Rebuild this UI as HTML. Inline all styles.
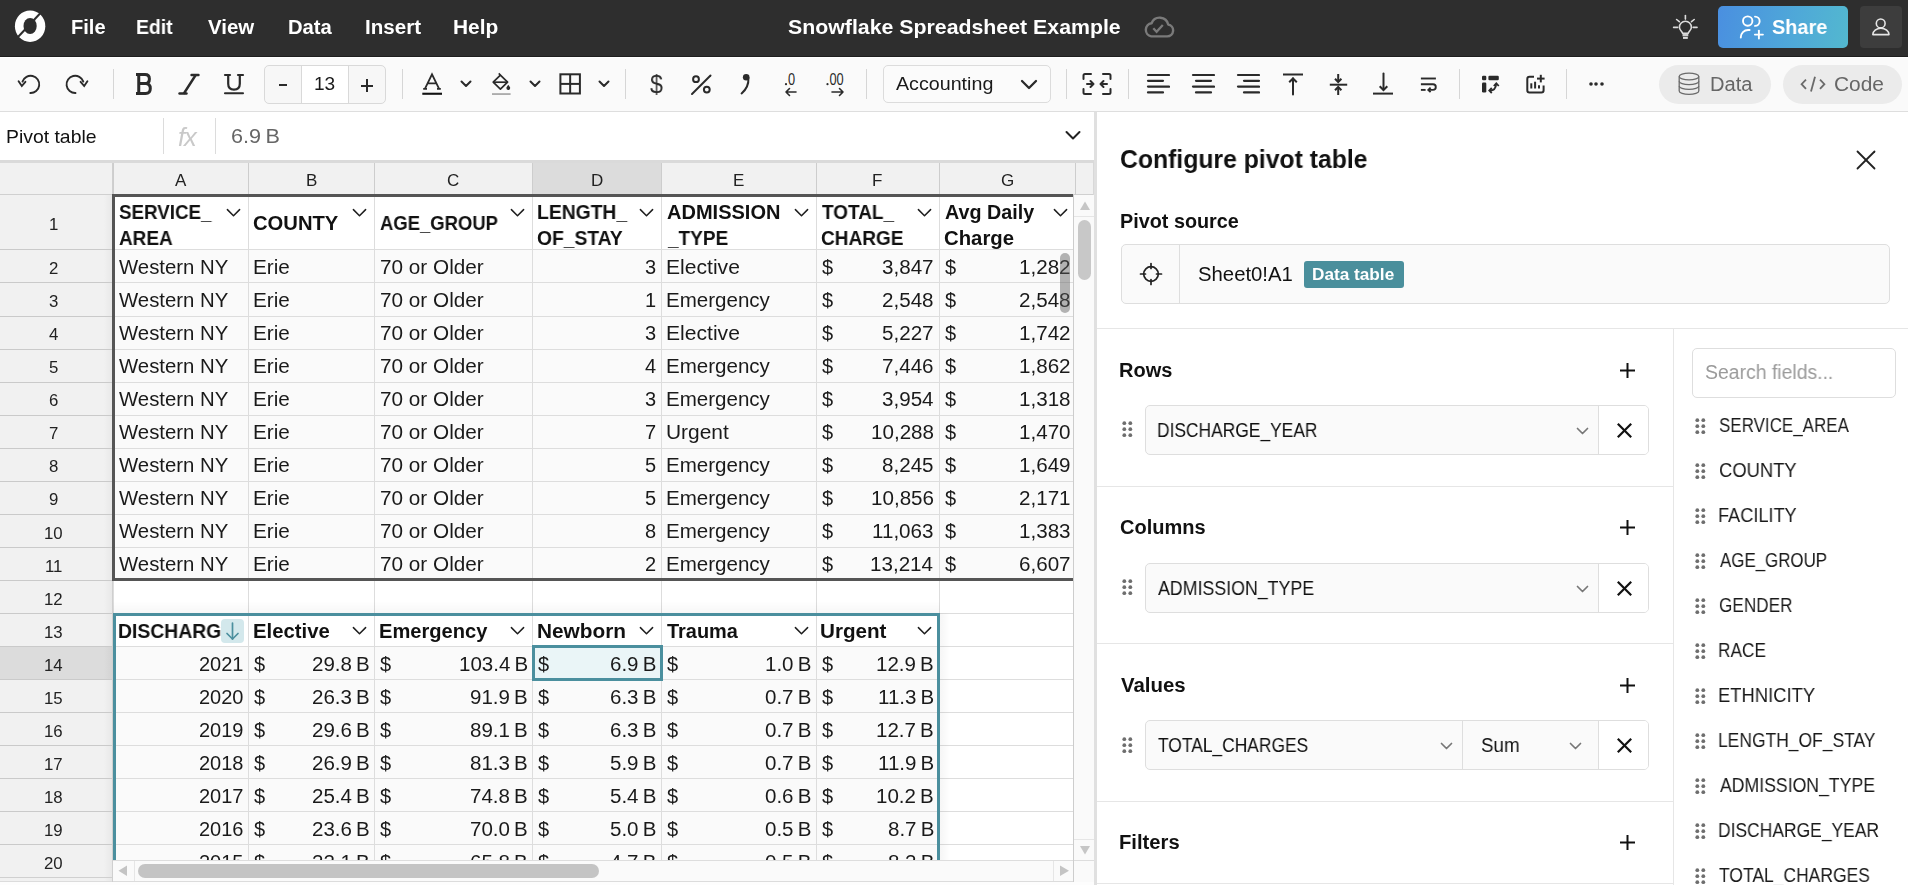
<!DOCTYPE html>
<html><head><meta charset="utf-8"><title>Snowflake Spreadsheet Example</title>
<style>
html,body{margin:0;padding:0;}
body{width:1908px;height:885px;overflow:hidden;position:relative;background:#fff;font-family:"Liberation Sans",sans-serif;}
.r{position:absolute;box-sizing:border-box;}
.t{position:absolute;white-space:pre;line-height:1;transform-origin:0 0;will-change:transform;}
</style></head><body>
<div class="r" style="left:0px;top:0px;width:1908px;height:56px;background:#2e2e2e;"></div>
<div class="r" style="left:0px;top:56px;width:1908px;height:1px;background:#1e1e1e;"></div>
<svg class="r" style="left:10px;top:6px;" width="40" height="40" viewBox="0 0 40 40"><ellipse cx="20.1" cy="20.2" rx="15.2" ry="15.7" fill="#fff"/><ellipse cx="20.1" cy="20" rx="6.6" ry="8" fill="#2e2e2e"/><line x1="31" y1="6.5" x2="7.5" y2="31.5" stroke="#2e2e2e" stroke-width="2"/></svg>
<div class="t" style="left:71.20px;top:17.27px;font-size:20px;font-weight:700;color:#fff;transform:scaleX(1.0031);">File</div>
<div class="t" style="left:136.34px;top:17.27px;font-size:20px;font-weight:700;color:#fff;transform:scaleX(0.9724);">Edit</div>
<div class="t" style="left:207.70px;top:17.27px;font-size:20px;font-weight:700;color:#fff;transform:scaleX(1.0221);">View</div>
<div class="t" style="left:287.68px;top:17.27px;font-size:20px;font-weight:700;color:#fff;transform:scaleX(1.0118);">Data</div>
<div class="t" style="left:365.26px;top:17.27px;font-size:20px;font-weight:700;color:#fff;transform:scaleX(1.0284);">Insert</div>
<div class="t" style="left:453.24px;top:17.27px;font-size:20px;font-weight:700;color:#fff;transform:scaleX(1.0437);">Help</div>
<div class="t" style="left:788.06px;top:15.82px;font-size:21px;font-weight:700;color:#fff;transform:scaleX(1.0145);">Snowflake Spreadsheet Example</div>
<svg class="r" style="left:1142px;top:16px;" width="34" height="24" viewBox="0 0 34 24"><path d="M9.2 20.4 H25.2 A6 6 0 0 0 26.2 8.5 A8.7 8.7 0 0 0 9.6 7.2 A6.7 6.7 0 0 0 9.2 20.4 Z" fill="none" stroke="#7a7a7a" stroke-width="2.4" stroke-linejoin="round"/><path d="M11.3 12.3 L14.6 15.8 L20.8 8.9" fill="none" stroke="#7a7a7a" stroke-width="2.3" stroke-linecap="butt" stroke-linejoin="miter"/></svg>
<svg class="r" style="left:1672px;top:14px;" width="26" height="26" viewBox="0 0 26 26"><g fill="none" stroke="#dcdcdc" stroke-width="1.6" stroke-linecap="round"><line x1="13.4" y1="1.6" x2="13.4" y2="5.1"/><line x1="1.6" y1="13.4" x2="5.6" y2="13.4"/><line x1="21.2" y1="13.4" x2="25" y2="13.4"/><line x1="4.6" y1="5.5" x2="7.3" y2="7.7"/><line x1="22.2" y1="5.5" x2="19.5" y2="7.7"/><path d="M10.6 19.3 C10.2 17.6 7.4 16.2 7.4 13.2 A6 6 0 0 1 19.4 13.2 C19.4 16.2 16.6 17.6 16.2 19.3 Z" stroke-linejoin="round"/></g><rect x="10.5" y="19.9" width="5.8" height="2.4" fill="#cfcfcf"/><rect x="11" y="22.9" width="4.8" height="2" fill="#dcdcdc"/></svg>
<div class="r" style="left:1718px;top:6px;width:130px;height:42px;border-radius:5px;background:linear-gradient(100deg,#4a8fe0 0%,#4fa9d8 60%,#53b8cf 100%);"></div>
<svg class="r" style="left:1739px;top:15px;" width="26" height="25" viewBox="0 0 26 25"><g fill="none" stroke="#fff" stroke-width="1.9" stroke-linecap="round"><circle cx="8.7" cy="6.1" r="4.7"/><path d="M16 1.6 A4.65 4.65 0 0 1 16 10.9"/><path d="M1.8 22.6 V22.3 A7.3 7.3 0 0 1 9.1 15 H10.6"/><line x1="19.9" y1="15.6" x2="19.9" y2="23.6"/><line x1="15.9" y1="19.6" x2="23.9" y2="19.6"/></g></svg>
<div class="t" style="left:1772.40px;top:16.87px;font-size:20px;font-weight:700;color:#fff;transform:scaleX(0.9945);">Share</div>
<div class="r" style="left:1860px;top:6px;width:42px;height:42px;background:#3d3d3d;border-radius:4px;"></div>
<svg class="r" style="left:1870px;top:16px;" width="22" height="22" viewBox="0 0 22 22"><g fill="none" stroke="#e6e6e6" stroke-width="1.6"><circle cx="10.7" cy="7.4" r="4.4"/><path d="M2.8 18.6 A8.1 6.4 0 0 1 19 18.6 Z" stroke-linejoin="round"/></g></svg>
<div class="r" style="left:0px;top:57px;width:1908px;height:1px;background:#ffffff;"></div>
<div class="r" style="left:0px;top:58px;width:1908px;height:53px;background:#fafafa;"></div>
<div class="r" style="left:0px;top:111px;width:1908px;height:1px;background:#dedede;"></div>
<div class="r" style="left:113px;top:69px;width:1px;height:30px;background:#d6d6d6;"></div>
<div class="r" style="left:402px;top:69px;width:1px;height:30px;background:#d6d6d6;"></div>
<div class="r" style="left:625px;top:69px;width:1px;height:30px;background:#d6d6d6;"></div>
<div class="r" style="left:866px;top:69px;width:1px;height:30px;background:#d6d6d6;"></div>
<div class="r" style="left:1066px;top:69px;width:1px;height:30px;background:#d6d6d6;"></div>
<div class="r" style="left:1128px;top:69px;width:1px;height:30px;background:#d6d6d6;"></div>
<div class="r" style="left:1459px;top:69px;width:1px;height:30px;background:#d6d6d6;"></div>
<div class="r" style="left:1566px;top:69px;width:1px;height:30px;background:#d6d6d6;"></div>
<svg class="r" style="left:17px;top:72px;" width="26" height="26" viewBox="0 0 26 26"><g fill="none" stroke="#2a2a2a" stroke-width="1.9" stroke-linecap="round" stroke-linejoin="miter"><path d="M13.3 21 A8.6 8.6 0 1 0 5.5 9.6"/><path d="M1.6 9.3 L4.8 14 L8.4 9.8"/></g></svg>
<svg class="r" style="left:65px;top:72px;" width="26" height="26" viewBox="0 0 26 26"><g fill="none" stroke="#2a2a2a" stroke-width="1.9" stroke-linecap="round" stroke-linejoin="miter"><path d="M10.5 21 A8.6 8.6 0 1 1 18.3 9.6"/><path d="M22.4 9.3 L19.2 14 L15.6 9.8"/></g></svg>
<svg class="r" style="left:133.4px;top:72px;" width="22" height="24" viewBox="0 0 22 24"><g fill="none" stroke="#2a2a2a" stroke-width="3" stroke-linejoin="round"><path d="M3 2.5 H12 C15.2 2.5 16.4 4.4 16.4 6.9 C16.4 9.6 14.8 11.5 12 11.5 H5.75"/><path d="M5.75 11.5 H12.6 C15.9 11.5 17.3 13.5 17.3 16.5 C17.3 19.5 15.8 21.5 12.6 21.5 H3"/><line x1="5.75" y1="2.5" x2="5.75" y2="21.5"/></g></svg>
<svg class="r" style="left:176px;top:72px;" width="26" height="26" viewBox="0 0 26 26"><g fill="none" stroke="#2a2a2a" stroke-width="2.4" stroke-linecap="round"><line x1="19.4" y1="3.5" x2="8.2" y2="21"/><line x1="15.5" y1="3" x2="22.5" y2="3"/><line x1="3.5" y1="21.5" x2="10.5" y2="21.5"/></g></svg>
<svg class="r" style="left:222px;top:72px;" width="24" height="26" viewBox="0 0 24 26"><g fill="none" stroke="#2a2a2a" stroke-width="2.2" stroke-linecap="round"><path d="M6.2 3 V11.8 C6.2 15.6 8.5 17.6 12 17.6 C15.5 17.6 17.8 15.6 17.8 11.8 V3"/><line x1="3" y1="3" x2="8" y2="3"/><line x1="16" y1="3" x2="21" y2="3"/><line x1="3" y1="21.2" x2="21" y2="21.2" stroke-width="2.1"/></g></svg>
<div class="r" style="left:264px;top:65px;width:122px;height:39px;border:1px solid #d9d9d9;border-radius:5px;background:#f7f7f7;"></div>
<div class="r" style="left:301px;top:66px;width:48px;height:37px;background:#fff;"></div>
<div class="r" style="left:301px;top:66px;width:1px;height:37px;background:#d9d9d9;"></div>
<div class="r" style="left:348px;top:66px;width:1px;height:37px;background:#d9d9d9;"></div>
<div class="r" style="left:279px;top:84px;width:8px;height:2px;background:#2a2a2a;"></div>
<div class="t" style="left:313.57px;top:74.32px;font-size:19px;font-weight:400;color:#1a1a1a;transform:scaleX(1.0050);">13</div>
<div class="r" style="left:360.8px;top:84.5px;width:12.5px;height:2px;background:#2a2a2a;"></div>
<div class="r" style="left:366px;top:79.3px;width:2px;height:12.5px;background:#2a2a2a;"></div>
<svg class="r" style="left:420px;top:72px;" width="26" height="26" viewBox="0 0 26 26"><g fill="none" stroke="#2a2a2a" stroke-width="1.8" stroke-linejoin="miter"><path d="M5 16.6 L12 2.3 L19 16.6 M7.6 11.3 H16.4"/><path d="M3.2 16.8 H7 M17 16.8 H20.8" stroke-width="1.7"/></g><rect x="2.3" y="20.7" width="19.7" height="2.1" fill="#111"/></svg>
<svg class="r" style="left:460px;top:80px;" width="12" height="8" viewBox="0 0 12 8"><path d="M1.5 1.5 L6 6 L10.5 1.5" fill="none" stroke="#2a2a2a" stroke-width="2" stroke-linecap="round" stroke-linejoin="round"/></svg>
<svg class="r" style="left:529px;top:80px;" width="12" height="8" viewBox="0 0 12 8"><path d="M1.5 1.5 L6 6 L10.5 1.5" fill="none" stroke="#2a2a2a" stroke-width="2" stroke-linecap="round" stroke-linejoin="round"/></svg>
<svg class="r" style="left:598px;top:80px;" width="12" height="8" viewBox="0 0 12 8"><path d="M1.5 1.5 L6 6 L10.5 1.5" fill="none" stroke="#2a2a2a" stroke-width="2" stroke-linecap="round" stroke-linejoin="round"/></svg>
<svg class="r" style="left:490px;top:72px;" width="26" height="26" viewBox="0 0 26 26"><g fill="none" stroke="#2a2a2a" stroke-width="1.7" stroke-linejoin="round"><path d="M10.4 3.2 L3.2 10.2 L10.4 17.2 L17.6 10.2 Z"/><line x1="3.2" y1="10.2" x2="17.6" y2="10.2"/><line x1="10.4" y1="3.2" x2="8.8" y2="1.4"/></g><path d="M18.3 12.8 C19.4 14.3 20.2 15.2 20.2 16.1 A1.9 1.9 0 0 1 16.4 16.1 C16.4 15.2 17.2 14.3 18.3 12.8Z" fill="#2a2a2a"/><rect x="2" y="21.3" width="18.6" height="1.5" fill="#999"/></svg>
<svg class="r" style="left:558px;top:72px;" width="24" height="24" viewBox="0 0 24 24"><g fill="none" stroke="#2a2a2a" stroke-width="2"><rect x="2.4" y="2.3" width="19.5" height="19.2"/><line x1="12.15" y1="2.3" x2="12.15" y2="21.5"/><line x1="2.4" y1="11.9" x2="21.9" y2="11.9"/></g></svg>
<div class="t" style="left:649.82px;top:72.04px;font-size:25px;font-weight:400;color:#2a2a2a;transform:scaleX(0.9283);">$</div>
<svg class="r" style="left:689px;top:72px;" width="26" height="26" viewBox="0 0 26 26"><g fill="none" stroke="#2a2a2a" stroke-width="2"><circle cx="7" cy="7.2" r="2.9"/><circle cx="17.8" cy="17.6" r="2.9"/><line x1="3" y1="22" x2="21.5" y2="3.5" stroke-linecap="round"/></g></svg>
<svg class="r" style="left:736px;top:70px;" width="16" height="28" viewBox="0 0 16 28"><circle cx="10.2" cy="7.2" r="3.3" fill="#2a2a2a"/><path d="M12.4 8 C12.8 14 10.2 19.5 5.6 23.4" fill="none" stroke="#2a2a2a" stroke-width="2" stroke-linecap="round"/></svg>
<svg class="r" style="left:780px;top:70px;" width="22" height="28" viewBox="0 0 22 28"><circle cx="6" cy="14.2" r="1.1" fill="#2a2a2a"/><text x="8" y="15.2" font-family="Liberation Sans" font-size="16" fill="#2a2a2a" transform="translate(8 0) scale(0.8 1) translate(-8 0)">0</text><path d="M16 22 H6 M9.5 18.5 L6 22 L9.5 25.5" fill="none" stroke="#2a2a2a" stroke-width="1.6" stroke-linecap="round" stroke-linejoin="round"/></svg>
<svg class="r" style="left:822px;top:70px;" width="28" height="28" viewBox="0 0 28 28"><circle cx="5.5" cy="14.2" r="1.1" fill="#2a2a2a"/><text x="7.5" y="15.2" font-family="Liberation Sans" font-size="16" fill="#2a2a2a" transform="translate(7.5 0) scale(0.8 1) translate(-7.5 0)">00</text><path d="M10 22 H21 M17.5 18.5 L21 22 L17.5 25.5" fill="none" stroke="#2a2a2a" stroke-width="1.6" stroke-linecap="round" stroke-linejoin="round"/></svg>
<div class="r" style="left:883px;top:65px;width:168px;height:38px;border:1px solid #dcdcdc;border-radius:5px;background:#fbfbfb;"></div>
<div class="t" style="left:896.00px;top:73.62px;font-size:19px;font-weight:400;color:#1a1a1a;transform:scaleX(1.0354);">Accounting</div>
<svg class="r" style="left:1020px;top:79px;" width="18" height="11" viewBox="0 0 18 11"><path d="M2 2 L9 9 L16 2" fill="none" stroke="#2a2a2a" stroke-width="2.3" stroke-linecap="round" stroke-linejoin="round"/></svg>
<svg class="r" style="left:1082px;top:73px;" width="30" height="22" viewBox="0 0 30 22"><g fill="none" stroke="#2a2a2a" stroke-width="2" stroke-linecap="round" stroke-linejoin="round"><path d="M1.5 6 V2.5 Q1.5 1 3 1 H9 M1.5 16 V19.5 Q1.5 21 3 21 H9 M21 1 H27 Q28.5 1 28.5 2.5 V6 M28.5 16 V19.5 Q28.5 21 27 21 H21"/><path d="M5 11 H11.5 M8.5 8 L11.5 11 L8.5 14 M25 11 H18.5 M21.5 8 L18.5 11 L21.5 14"/></g></svg>
<svg class="r" style="left:1146px;top:73px;" width="24" height="22" viewBox="0 0 24 22"><g stroke="#2a2a2a" stroke-width="2.2" stroke-linecap="round"><line x1="2" y1="2.0" x2="23" y2="2.0"/><line x1="2" y1="7.8" x2="17" y2="7.8"/><line x1="2" y1="13.6" x2="23" y2="13.6"/><line x1="2" y1="19.4" x2="17" y2="19.4"/></g></svg>
<svg class="r" style="left:1191px;top:73px;" width="24" height="22" viewBox="0 0 24 22"><g stroke="#2a2a2a" stroke-width="2.2" stroke-linecap="round"><line x1="2" y1="2.0" x2="23" y2="2.0"/><line x1="5" y1="7.8" x2="20" y2="7.8"/><line x1="2" y1="13.6" x2="23" y2="13.6"/><line x1="5" y1="19.4" x2="20" y2="19.4"/></g></svg>
<svg class="r" style="left:1236px;top:73px;" width="24" height="22" viewBox="0 0 24 22"><g stroke="#2a2a2a" stroke-width="2.2" stroke-linecap="round"><line x1="2" y1="2.0" x2="23" y2="2.0"/><line x1="8" y1="7.8" x2="23" y2="7.8"/><line x1="2" y1="13.6" x2="23" y2="13.6"/><line x1="8" y1="19.4" x2="23" y2="19.4"/></g></svg>
<svg class="r" style="left:1281px;top:72px;" width="24" height="24" viewBox="0 0 24 24"><g stroke="#2a2a2a" stroke-width="2" stroke-linecap="butt" fill="none" stroke-linejoin="miter"><line x1="2" y1="2.5" x2="22" y2="2.5"/><line x1="12" y1="6.5" x2="12" y2="22.5" stroke-linecap="round"/><path d="M8.2 10.3 L12 6.5 L15.8 10.3"/></g></svg>
<svg class="r" style="left:1327px;top:72px;" width="24" height="24" viewBox="0 0 24 24"><g stroke="#2a2a2a" stroke-width="2" stroke-linecap="butt" fill="none"><line x1="2.8" y1="12.7" x2="20.2" y2="12.7"/><line x1="11.2" y1="2" x2="11.2" y2="9.8"/><path d="M8 6.8 L11.2 10 L14.4 6.8"/><line x1="11.2" y1="15.2" x2="11.2" y2="23"/><path d="M8 18.2 L11.2 15 L14.4 18.2"/></g></svg>
<svg class="r" style="left:1371px;top:72px;" width="24" height="24" viewBox="0 0 24 24"><g stroke="#2a2a2a" stroke-width="2" stroke-linecap="butt" fill="none"><line x1="2" y1="21.6" x2="22" y2="21.6"/><line x1="12.5" y1="1.6" x2="12.5" y2="17.5" stroke-linecap="round"/><path d="M8.7 14.2 L12.5 18 L16.3 14.2"/></g></svg>
<svg class="r" style="left:1418px;top:72px;" width="22" height="24" viewBox="0 0 22 24"><g stroke="#2a2a2a" stroke-width="1.9" stroke-linecap="butt" fill="none" stroke-linejoin="miter"><line x1="2.9" y1="6.5" x2="17.9" y2="6.5"/><path d="M2.9 12.3 H15 A2.8 2.8 0 0 1 15 17.9 H10.5"/><line x1="2.9" y1="17.9" x2="7.6" y2="17.9"/><path d="M12.6 15.6 L10.3 17.9 L12.6 20.2"/></g></svg>
<svg class="r" style="left:1480px;top:74px;" width="22" height="22" viewBox="0 0 22 22"><g fill="#2a2a2a"><rect x="2" y="1.8" width="4.3" height="4.5" rx="1.2"/><rect x="8.4" y="1.8" width="10.4" height="4.5" rx="1.2"/><rect x="2" y="8.6" width="4.3" height="9.9" rx="1.2"/></g><g fill="none" stroke="#2a2a2a" stroke-width="1.8" stroke-linecap="butt" stroke-linejoin="miter"><path d="M10 16.5 Q15.8 16.5 16.2 10"/><path d="M13.8 12 L16.3 9.4 L18.8 12"/><path d="M11.8 14 L9.3 16.5 L11.8 19"/></g></svg>
<svg class="r" style="left:1525px;top:72px;" width="24" height="24" viewBox="0 0 24 24"><g fill="none" stroke="#2a2a2a" stroke-width="2" stroke-linecap="butt" stroke-linejoin="round"><path d="M9 4.7 H4.5 Q2.3 4.7 2.3 6.9 V18.3 Q2.3 20.5 4.5 20.5 H16.4 Q18.6 20.5 18.6 18.3 V13.5"/><line x1="6.3" y1="11.3" x2="6.3" y2="16.5"/><line x1="10.1" y1="9.7" x2="10.1" y2="16.5"/><line x1="14" y1="13.2" x2="14" y2="16.5"/><line x1="15.8" y1="2.8" x2="15.8" y2="10.4"/><line x1="12" y1="6.6" x2="19.6" y2="6.6"/></g></svg>
<svg class="r" style="left:1588.5px;top:82px;" width="4" height="4" viewBox="0 0 4 4"><circle cx="2" cy="2" r="1.8" fill="#2a2a2a"/></svg>
<svg class="r" style="left:1594px;top:82px;" width="4" height="4" viewBox="0 0 4 4"><circle cx="2" cy="2" r="1.8" fill="#2a2a2a"/></svg>
<svg class="r" style="left:1599.5px;top:82px;" width="4" height="4" viewBox="0 0 4 4"><circle cx="2" cy="2" r="1.8" fill="#2a2a2a"/></svg>
<div class="r" style="left:1659px;top:65px;width:112px;height:39px;background:#ebebeb;border-radius:20px;"></div>
<svg class="r" style="left:1677px;top:72px;" width="24" height="24" viewBox="0 0 24 24"><g fill="none" stroke="#6a6a6a" stroke-width="1.3"><ellipse cx="12" cy="4.5" rx="9.8" ry="3.3"/><path d="M2.2 4.5 V19 A9.8 3.3 0 0 0 21.8 19 V4.5"/><path d="M2.2 9.3 A9.8 3.3 0 0 0 21.8 9.3"/><path d="M2.2 14.1 A9.8 3.3 0 0 0 21.8 14.1"/></g></svg>
<div class="t" style="left:1709.99px;top:73.77px;font-size:20px;font-weight:400;color:#666;transform:scaleX(1.0049);">Data</div>
<div class="r" style="left:1783px;top:65px;width:119px;height:39px;background:#ebebeb;border-radius:20px;"></div>
<svg class="r" style="left:1799px;top:75px;" width="28" height="18" viewBox="0 0 28 18"><g fill="none" stroke="#6a6a6a" stroke-width="1.8" stroke-linecap="butt" stroke-linejoin="miter"><path d="M7 4.6 L2.6 9.2 L7 13.8"/><path d="M21 4.6 L25.4 9.2 L21 13.8"/><line x1="16" y1="1.7" x2="12" y2="16.4"/></g></svg>
<div class="t" style="left:1833.95px;top:73.77px;font-size:20px;font-weight:400;color:#666;transform:scaleX(1.0458);">Code</div>
<div class="r" style="left:0px;top:112px;width:1094px;height:48px;background:#fff;"></div>
<div class="r" style="left:0px;top:160px;width:1094px;height:3px;background:#dadada;"></div>
<div class="t" style="left:5.95px;top:126.62px;font-size:19px;font-weight:400;color:#111;transform:scaleX(1.0202);">Pivot table</div>
<div class="r" style="left:162.5px;top:118px;width:1.5px;height:36px;background:#dcdcdc;"></div>
<div class="r" style="left:214.8px;top:118px;width:1.5px;height:36px;background:#dcdcdc;"></div>
<div class="t" style="left:178px;top:125px;font-size:25.5px;font-style:italic;color:#c9c9c9;letter-spacing:-1px;">fx</div>
<div class="t" style="left:230.92px;top:125.77px;font-size:20px;font-weight:400;color:#666;transform:scaleX(1.0812);">6.9 B</div>
<svg class="r" style="left:1065px;top:130px;" width="16" height="11" viewBox="0 0 16 11"><path d="M1.5 2 L8 8.5 L14.5 2" fill="none" stroke="#222" stroke-width="2" stroke-linecap="round" stroke-linejoin="round"/></svg>
<div class="r" style="left:0px;top:163px;width:1094px;height:697px;background:#fafafa;"></div>
<div class="r" style="left:113px;top:195px;width:961px;height:54px;background:#fff;"></div>
<div class="r" style="left:113px;top:580px;width:961px;height:66px;background:#fff;"></div>
<div class="r" style="left:939px;top:613px;width:135px;height:247px;background:#fff;"></div>
<div class="r" style="left:0px;top:163px;width:1094px;height:32px;background:#f1f1f1;"></div>
<div class="r" style="left:532px;top:163px;width:129px;height:32px;background:#dcdcdc;"></div>
<div class="t" style="left:175.35px;top:172.21px;font-size:17px;font-weight:400;color:#222;">A</div>
<div class="t" style="left:305.59px;top:172.21px;font-size:17px;font-weight:400;color:#222;">B</div>
<div class="t" style="left:447.25px;top:172.21px;font-size:17px;font-weight:400;color:#222;">C</div>
<div class="t" style="left:590.58px;top:172.21px;font-size:17px;font-weight:400;color:#222;">D</div>
<div class="t" style="left:733.01px;top:172.21px;font-size:17px;font-weight:400;color:#222;">E</div>
<div class="t" style="left:872.48px;top:172.21px;font-size:17px;font-weight:400;color:#222;">F</div>
<div class="t" style="left:1000.58px;top:172.21px;font-size:17px;font-weight:400;color:#222;">G</div>
<div class="r" style="left:0px;top:195px;width:113px;height:665px;background:#f1f1f1;"></div>
<div class="r" style="left:0px;top:647px;width:113px;height:32px;background:#dcdcdc;"></div>
<div class="r" style="left:104px;top:195px;width:9px;height:665px;background:linear-gradient(90deg,rgba(0,0,0,0) 0%,rgba(0,0,0,0.045) 100%);"></div>
<div class="r" style="left:0px;top:249px;width:1074px;height:1px;background:#dddddd;"></div>
<div class="r" style="left:0px;top:282px;width:1074px;height:1px;background:#dddddd;"></div>
<div class="r" style="left:0px;top:316px;width:1074px;height:1px;background:#dddddd;"></div>
<div class="r" style="left:0px;top:349px;width:1074px;height:1px;background:#dddddd;"></div>
<div class="r" style="left:0px;top:382px;width:1074px;height:1px;background:#dddddd;"></div>
<div class="r" style="left:0px;top:415px;width:1074px;height:1px;background:#dddddd;"></div>
<div class="r" style="left:0px;top:448px;width:1074px;height:1px;background:#dddddd;"></div>
<div class="r" style="left:0px;top:481px;width:1074px;height:1px;background:#dddddd;"></div>
<div class="r" style="left:0px;top:514px;width:1074px;height:1px;background:#dddddd;"></div>
<div class="r" style="left:0px;top:547px;width:1074px;height:1px;background:#dddddd;"></div>
<div class="r" style="left:0px;top:580px;width:1074px;height:1px;background:#dddddd;"></div>
<div class="r" style="left:0px;top:613px;width:1074px;height:1px;background:#dddddd;"></div>
<div class="r" style="left:0px;top:646px;width:1074px;height:1px;background:#dddddd;"></div>
<div class="r" style="left:0px;top:679px;width:1074px;height:1px;background:#dddddd;"></div>
<div class="r" style="left:0px;top:712px;width:1074px;height:1px;background:#dddddd;"></div>
<div class="r" style="left:0px;top:745px;width:1074px;height:1px;background:#dddddd;"></div>
<div class="r" style="left:0px;top:778px;width:1074px;height:1px;background:#dddddd;"></div>
<div class="r" style="left:0px;top:811px;width:1074px;height:1px;background:#dddddd;"></div>
<div class="r" style="left:0px;top:844px;width:1074px;height:1px;background:#dddddd;"></div>
<div class="r" style="left:0px;top:877px;width:1074px;height:1px;background:#dddddd;"></div>
<div class="r" style="left:0px;top:249px;width:113px;height:1px;background:#cacaca;"></div>
<div class="r" style="left:0px;top:282px;width:113px;height:1px;background:#cacaca;"></div>
<div class="r" style="left:0px;top:316px;width:113px;height:1px;background:#cacaca;"></div>
<div class="r" style="left:0px;top:349px;width:113px;height:1px;background:#cacaca;"></div>
<div class="r" style="left:0px;top:382px;width:113px;height:1px;background:#cacaca;"></div>
<div class="r" style="left:0px;top:415px;width:113px;height:1px;background:#cacaca;"></div>
<div class="r" style="left:0px;top:448px;width:113px;height:1px;background:#cacaca;"></div>
<div class="r" style="left:0px;top:481px;width:113px;height:1px;background:#cacaca;"></div>
<div class="r" style="left:0px;top:514px;width:113px;height:1px;background:#cacaca;"></div>
<div class="r" style="left:0px;top:547px;width:113px;height:1px;background:#cacaca;"></div>
<div class="r" style="left:0px;top:580px;width:113px;height:1px;background:#cacaca;"></div>
<div class="r" style="left:0px;top:613px;width:113px;height:1px;background:#cacaca;"></div>
<div class="r" style="left:0px;top:646px;width:113px;height:1px;background:#cacaca;"></div>
<div class="r" style="left:0px;top:679px;width:113px;height:1px;background:#cacaca;"></div>
<div class="r" style="left:0px;top:712px;width:113px;height:1px;background:#cacaca;"></div>
<div class="r" style="left:0px;top:745px;width:113px;height:1px;background:#cacaca;"></div>
<div class="r" style="left:0px;top:778px;width:113px;height:1px;background:#cacaca;"></div>
<div class="r" style="left:0px;top:811px;width:113px;height:1px;background:#cacaca;"></div>
<div class="r" style="left:0px;top:844px;width:113px;height:1px;background:#cacaca;"></div>
<div class="r" style="left:0px;top:877px;width:113px;height:1px;background:#cacaca;"></div>
<div class="r" style="left:0px;top:194px;width:1094px;height:1px;background:#d0d0d0;"></div>
<div class="r" style="left:113px;top:163px;width:1px;height:697px;background:#dddddd;"></div>
<div class="r" style="left:248px;top:163px;width:1px;height:697px;background:#dddddd;"></div>
<div class="r" style="left:374px;top:163px;width:1px;height:697px;background:#dddddd;"></div>
<div class="r" style="left:532px;top:163px;width:1px;height:697px;background:#dddddd;"></div>
<div class="r" style="left:661px;top:163px;width:1px;height:697px;background:#dddddd;"></div>
<div class="r" style="left:816px;top:163px;width:1px;height:697px;background:#dddddd;"></div>
<div class="r" style="left:939px;top:163px;width:1px;height:697px;background:#dddddd;"></div>
<div class="r" style="left:113px;top:163px;width:1px;height:32px;background:#cdcdcd;"></div>
<div class="r" style="left:248px;top:163px;width:1px;height:32px;background:#cdcdcd;"></div>
<div class="r" style="left:374px;top:163px;width:1px;height:32px;background:#cdcdcd;"></div>
<div class="r" style="left:532px;top:163px;width:1px;height:32px;background:#cdcdcd;"></div>
<div class="r" style="left:661px;top:163px;width:1px;height:32px;background:#cdcdcd;"></div>
<div class="r" style="left:816px;top:163px;width:1px;height:32px;background:#cdcdcd;"></div>
<div class="r" style="left:939px;top:163px;width:1px;height:32px;background:#cdcdcd;"></div>
<div class="r" style="left:1075px;top:163px;width:1px;height:32px;background:#cdcdcd;"></div>
<div class="r" style="left:112px;top:163px;width:1px;height:697px;background:#cfcfcf;"></div>
<div class="r" style="left:1093px;top:162px;width:1px;height:698px;background:#d8d8d8;"></div>
<div class="t" style="left:48.59px;top:216.98px;font-size:16.8px;font-weight:400;color:#222;">1</div>
<div class="t" style="left:48.84px;top:261.08px;font-size:16.8px;font-weight:400;color:#222;">2</div>
<div class="t" style="left:48.84px;top:294.13px;font-size:16.8px;font-weight:400;color:#222;">3</div>
<div class="t" style="left:48.92px;top:327.19px;font-size:16.8px;font-weight:400;color:#222;">4</div>
<div class="t" style="left:48.84px;top:360.24px;font-size:16.8px;font-weight:400;color:#222;">5</div>
<div class="t" style="left:48.75px;top:393.30px;font-size:16.8px;font-weight:400;color:#222;">6</div>
<div class="t" style="left:48.84px;top:426.35px;font-size:16.8px;font-weight:400;color:#222;">7</div>
<div class="t" style="left:48.80px;top:459.41px;font-size:16.8px;font-weight:400;color:#222;">8</div>
<div class="t" style="left:48.84px;top:492.46px;font-size:16.8px;font-weight:400;color:#222;">9</div>
<div class="t" style="left:43.84px;top:525.52px;font-size:16.8px;font-weight:400;color:#222;">10</div>
<div class="t" style="left:44.55px;top:558.57px;font-size:16.8px;font-weight:400;color:#222;">11</div>
<div class="t" style="left:43.97px;top:591.63px;font-size:16.8px;font-weight:400;color:#222;">12</div>
<div class="t" style="left:43.88px;top:624.68px;font-size:16.8px;font-weight:400;color:#222;">13</div>
<div class="t" style="left:43.80px;top:657.74px;font-size:16.8px;font-weight:400;color:#222;">14</div>
<div class="t" style="left:43.88px;top:690.79px;font-size:16.8px;font-weight:400;color:#222;">15</div>
<div class="t" style="left:43.88px;top:723.85px;font-size:16.8px;font-weight:400;color:#222;">16</div>
<div class="t" style="left:43.97px;top:756.90px;font-size:16.8px;font-weight:400;color:#222;">17</div>
<div class="t" style="left:43.88px;top:789.96px;font-size:16.8px;font-weight:400;color:#222;">18</div>
<div class="t" style="left:43.92px;top:823.01px;font-size:16.8px;font-weight:400;color:#222;">19</div>
<div class="t" style="left:118.64px;top:203.29px;font-size:19.5px;font-weight:700;color:#111;transform:scaleX(0.9619);">SERVICE_</div>
<div class="t" style="left:118.73px;top:229.09px;font-size:19.5px;font-weight:700;color:#111;transform:scaleX(0.9703);">AREA</div>
<svg class="r" style="left:225.5px;top:208px;" width="15" height="9" viewBox="0 0 15 9"><path d="M1.4 1.6 L7.5 7.7 L13.6 1.6" fill="none" stroke="#1e1e1e" stroke-width="1.5" stroke-linecap="round" stroke-linejoin="round"/></svg>
<div class="t" style="left:253.49px;top:214.09px;font-size:19.5px;font-weight:700;color:#111;transform:scaleX(1.0367);">COUNTY</div>
<svg class="r" style="left:351.5px;top:208px;" width="15" height="9" viewBox="0 0 15 9"><path d="M1.4 1.6 L7.5 7.7 L13.6 1.6" fill="none" stroke="#1e1e1e" stroke-width="1.5" stroke-linecap="round" stroke-linejoin="round"/></svg>
<div class="t" style="left:379.54px;top:214.09px;font-size:19.5px;font-weight:700;color:#111;transform:scaleX(0.9471);">AGE_GROUP</div>
<svg class="r" style="left:509.5px;top:208px;" width="15" height="9" viewBox="0 0 15 9"><path d="M1.4 1.6 L7.5 7.7 L13.6 1.6" fill="none" stroke="#1e1e1e" stroke-width="1.5" stroke-linecap="round" stroke-linejoin="round"/></svg>
<div class="t" style="left:536.75px;top:203.29px;font-size:19.5px;font-weight:700;color:#111;transform:scaleX(0.9900);">LENGTH_</div>
<div class="t" style="left:537.23px;top:229.09px;font-size:19.5px;font-weight:700;color:#111;transform:scaleX(0.9871);">OF_STAY</div>
<svg class="r" style="left:638.5px;top:208px;" width="15" height="9" viewBox="0 0 15 9"><path d="M1.4 1.6 L7.5 7.7 L13.6 1.6" fill="none" stroke="#1e1e1e" stroke-width="1.5" stroke-linecap="round" stroke-linejoin="round"/></svg>
<div class="t" style="left:667.10px;top:203.29px;font-size:19.5px;font-weight:700;color:#111;transform:scaleX(1.0266);">ADMISSION</div>
<div class="t" style="left:667.79px;top:229.09px;font-size:19.5px;font-weight:700;color:#111;transform:scaleX(0.9750);">_TYPE</div>
<svg class="r" style="left:793.5px;top:208px;" width="15" height="9" viewBox="0 0 15 9"><path d="M1.4 1.6 L7.5 7.7 L13.6 1.6" fill="none" stroke="#1e1e1e" stroke-width="1.5" stroke-linecap="round" stroke-linejoin="round"/></svg>
<div class="t" style="left:821.81px;top:203.29px;font-size:19.5px;font-weight:700;color:#111;transform:scaleX(0.9729);">TOTAL_</div>
<div class="t" style="left:821.24px;top:229.09px;font-size:19.5px;font-weight:700;color:#111;transform:scaleX(0.9762);">CHARGE</div>
<svg class="r" style="left:916.5px;top:208px;" width="15" height="9" viewBox="0 0 15 9"><path d="M1.4 1.6 L7.5 7.7 L13.6 1.6" fill="none" stroke="#1e1e1e" stroke-width="1.5" stroke-linecap="round" stroke-linejoin="round"/></svg>
<div class="t" style="left:944.51px;top:203.29px;font-size:19.5px;font-weight:700;color:#111;transform:scaleX(1.0108);">Avg Daily</div>
<div class="t" style="left:944.19px;top:229.09px;font-size:19.5px;font-weight:700;color:#111;transform:scaleX(1.0424);">Charge</div>
<svg class="r" style="left:1053.0px;top:208px;" width="15" height="9" viewBox="0 0 15 9"><path d="M1.4 1.6 L7.5 7.7 L13.6 1.6" fill="none" stroke="#1e1e1e" stroke-width="1.5" stroke-linecap="round" stroke-linejoin="round"/></svg>
<div class="t" style="left:119.00px;top:256.97px;font-size:20px;font-weight:400;color:#1a1a1a;transform:scaleX(1.0178);">Western NY</div>
<div class="t" style="left:252.84px;top:256.97px;font-size:20px;font-weight:400;color:#1a1a1a;transform:scaleX(1.0364);">Erie</div>
<div class="t" style="left:379.66px;top:256.97px;font-size:20px;font-weight:400;color:#1a1a1a;transform:scaleX(1.0365);">70 or Older</div>
<div class="t" style="left:644.80px;top:256.97px;font-size:20px;font-weight:400;color:#1a1a1a;">3</div>
<div class="t" style="left:665.81px;top:256.97px;font-size:20px;font-weight:400;color:#1a1a1a;transform:scaleX(1.0548);">Elective</div>
<div class="t" style="left:822.00px;top:256.97px;font-size:20px;font-weight:400;color:#1a1a1a;">$</div>
<div class="t" style="left:882.33px;top:256.97px;font-size:20px;font-weight:400;color:#1a1a1a;transform:scaleX(1.0300);">3,847</div>
<div class="t" style="left:945.40px;top:256.97px;font-size:20px;font-weight:400;color:#1a1a1a;">$</div>
<div class="t" style="left:1019.13px;top:256.97px;font-size:20px;font-weight:400;color:#1a1a1a;transform:scaleX(1.0300);">1,282</div>
<div class="t" style="left:119.00px;top:290.02px;font-size:20px;font-weight:400;color:#1a1a1a;transform:scaleX(1.0178);">Western NY</div>
<div class="t" style="left:252.84px;top:290.02px;font-size:20px;font-weight:400;color:#1a1a1a;transform:scaleX(1.0364);">Erie</div>
<div class="t" style="left:379.66px;top:290.02px;font-size:20px;font-weight:400;color:#1a1a1a;transform:scaleX(1.0365);">70 or Older</div>
<div class="t" style="left:644.90px;top:290.02px;font-size:20px;font-weight:400;color:#1a1a1a;">1</div>
<div class="t" style="left:665.86px;top:290.02px;font-size:20px;font-weight:400;color:#1a1a1a;transform:scaleX(1.0271);">Emergency</div>
<div class="t" style="left:822.00px;top:290.02px;font-size:20px;font-weight:400;color:#1a1a1a;">$</div>
<div class="t" style="left:882.12px;top:290.02px;font-size:20px;font-weight:400;color:#1a1a1a;transform:scaleX(1.0300);">2,548</div>
<div class="t" style="left:945.40px;top:290.02px;font-size:20px;font-weight:400;color:#1a1a1a;">$</div>
<div class="t" style="left:1018.92px;top:290.02px;font-size:20px;font-weight:400;color:#1a1a1a;transform:scaleX(1.0300);">2,548</div>
<div class="t" style="left:119.00px;top:323.08px;font-size:20px;font-weight:400;color:#1a1a1a;transform:scaleX(1.0178);">Western NY</div>
<div class="t" style="left:252.84px;top:323.08px;font-size:20px;font-weight:400;color:#1a1a1a;transform:scaleX(1.0364);">Erie</div>
<div class="t" style="left:379.66px;top:323.08px;font-size:20px;font-weight:400;color:#1a1a1a;transform:scaleX(1.0365);">70 or Older</div>
<div class="t" style="left:644.80px;top:323.08px;font-size:20px;font-weight:400;color:#1a1a1a;">3</div>
<div class="t" style="left:665.81px;top:323.08px;font-size:20px;font-weight:400;color:#1a1a1a;transform:scaleX(1.0548);">Elective</div>
<div class="t" style="left:822.00px;top:323.08px;font-size:20px;font-weight:400;color:#1a1a1a;">$</div>
<div class="t" style="left:882.33px;top:323.08px;font-size:20px;font-weight:400;color:#1a1a1a;transform:scaleX(1.0300);">5,227</div>
<div class="t" style="left:945.40px;top:323.08px;font-size:20px;font-weight:400;color:#1a1a1a;">$</div>
<div class="t" style="left:1019.13px;top:323.08px;font-size:20px;font-weight:400;color:#1a1a1a;transform:scaleX(1.0300);">1,742</div>
<div class="t" style="left:119.00px;top:356.13px;font-size:20px;font-weight:400;color:#1a1a1a;transform:scaleX(1.0178);">Western NY</div>
<div class="t" style="left:252.84px;top:356.13px;font-size:20px;font-weight:400;color:#1a1a1a;transform:scaleX(1.0364);">Erie</div>
<div class="t" style="left:379.66px;top:356.13px;font-size:20px;font-weight:400;color:#1a1a1a;transform:scaleX(1.0365);">70 or Older</div>
<div class="t" style="left:644.60px;top:356.13px;font-size:20px;font-weight:400;color:#1a1a1a;">4</div>
<div class="t" style="left:665.86px;top:356.13px;font-size:20px;font-weight:400;color:#1a1a1a;transform:scaleX(1.0271);">Emergency</div>
<div class="t" style="left:822.00px;top:356.13px;font-size:20px;font-weight:400;color:#1a1a1a;">$</div>
<div class="t" style="left:882.12px;top:356.13px;font-size:20px;font-weight:400;color:#1a1a1a;transform:scaleX(1.0300);">7,446</div>
<div class="t" style="left:945.40px;top:356.13px;font-size:20px;font-weight:400;color:#1a1a1a;">$</div>
<div class="t" style="left:1019.13px;top:356.13px;font-size:20px;font-weight:400;color:#1a1a1a;transform:scaleX(1.0300);">1,862</div>
<div class="t" style="left:119.00px;top:389.19px;font-size:20px;font-weight:400;color:#1a1a1a;transform:scaleX(1.0178);">Western NY</div>
<div class="t" style="left:252.84px;top:389.19px;font-size:20px;font-weight:400;color:#1a1a1a;transform:scaleX(1.0364);">Erie</div>
<div class="t" style="left:379.66px;top:389.19px;font-size:20px;font-weight:400;color:#1a1a1a;transform:scaleX(1.0365);">70 or Older</div>
<div class="t" style="left:644.80px;top:389.19px;font-size:20px;font-weight:400;color:#1a1a1a;">3</div>
<div class="t" style="left:665.86px;top:389.19px;font-size:20px;font-weight:400;color:#1a1a1a;transform:scaleX(1.0271);">Emergency</div>
<div class="t" style="left:822.00px;top:389.19px;font-size:20px;font-weight:400;color:#1a1a1a;">$</div>
<div class="t" style="left:881.92px;top:389.19px;font-size:20px;font-weight:400;color:#1a1a1a;transform:scaleX(1.0300);">3,954</div>
<div class="t" style="left:945.40px;top:389.19px;font-size:20px;font-weight:400;color:#1a1a1a;">$</div>
<div class="t" style="left:1018.92px;top:389.19px;font-size:20px;font-weight:400;color:#1a1a1a;transform:scaleX(1.0300);">1,318</div>
<div class="t" style="left:119.00px;top:422.24px;font-size:20px;font-weight:400;color:#1a1a1a;transform:scaleX(1.0178);">Western NY</div>
<div class="t" style="left:252.84px;top:422.24px;font-size:20px;font-weight:400;color:#1a1a1a;transform:scaleX(1.0364);">Erie</div>
<div class="t" style="left:379.66px;top:422.24px;font-size:20px;font-weight:400;color:#1a1a1a;transform:scaleX(1.0365);">70 or Older</div>
<div class="t" style="left:645.00px;top:422.24px;font-size:20px;font-weight:400;color:#1a1a1a;">7</div>
<div class="t" style="left:665.93px;top:422.24px;font-size:20px;font-weight:400;color:#1a1a1a;transform:scaleX(1.0462);">Urgent</div>
<div class="t" style="left:822.00px;top:422.24px;font-size:20px;font-weight:400;color:#1a1a1a;">$</div>
<div class="t" style="left:870.59px;top:422.24px;font-size:20px;font-weight:400;color:#1a1a1a;transform:scaleX(1.0300);">10,288</div>
<div class="t" style="left:945.40px;top:422.24px;font-size:20px;font-weight:400;color:#1a1a1a;">$</div>
<div class="t" style="left:1018.82px;top:422.24px;font-size:20px;font-weight:400;color:#1a1a1a;transform:scaleX(1.0300);">1,470</div>
<div class="t" style="left:119.00px;top:455.30px;font-size:20px;font-weight:400;color:#1a1a1a;transform:scaleX(1.0178);">Western NY</div>
<div class="t" style="left:252.84px;top:455.30px;font-size:20px;font-weight:400;color:#1a1a1a;transform:scaleX(1.0364);">Erie</div>
<div class="t" style="left:379.66px;top:455.30px;font-size:20px;font-weight:400;color:#1a1a1a;transform:scaleX(1.0365);">70 or Older</div>
<div class="t" style="left:644.80px;top:455.30px;font-size:20px;font-weight:400;color:#1a1a1a;">5</div>
<div class="t" style="left:665.86px;top:455.30px;font-size:20px;font-weight:400;color:#1a1a1a;transform:scaleX(1.0271);">Emergency</div>
<div class="t" style="left:822.00px;top:455.30px;font-size:20px;font-weight:400;color:#1a1a1a;">$</div>
<div class="t" style="left:882.12px;top:455.30px;font-size:20px;font-weight:400;color:#1a1a1a;transform:scaleX(1.0300);">8,245</div>
<div class="t" style="left:945.40px;top:455.30px;font-size:20px;font-weight:400;color:#1a1a1a;">$</div>
<div class="t" style="left:1019.03px;top:455.30px;font-size:20px;font-weight:400;color:#1a1a1a;transform:scaleX(1.0300);">1,649</div>
<div class="t" style="left:119.00px;top:488.35px;font-size:20px;font-weight:400;color:#1a1a1a;transform:scaleX(1.0178);">Western NY</div>
<div class="t" style="left:252.84px;top:488.35px;font-size:20px;font-weight:400;color:#1a1a1a;transform:scaleX(1.0364);">Erie</div>
<div class="t" style="left:379.66px;top:488.35px;font-size:20px;font-weight:400;color:#1a1a1a;transform:scaleX(1.0365);">70 or Older</div>
<div class="t" style="left:644.80px;top:488.35px;font-size:20px;font-weight:400;color:#1a1a1a;">5</div>
<div class="t" style="left:665.86px;top:488.35px;font-size:20px;font-weight:400;color:#1a1a1a;transform:scaleX(1.0271);">Emergency</div>
<div class="t" style="left:822.00px;top:488.35px;font-size:20px;font-weight:400;color:#1a1a1a;">$</div>
<div class="t" style="left:870.59px;top:488.35px;font-size:20px;font-weight:400;color:#1a1a1a;transform:scaleX(1.0300);">10,856</div>
<div class="t" style="left:945.40px;top:488.35px;font-size:20px;font-weight:400;color:#1a1a1a;">$</div>
<div class="t" style="left:1019.03px;top:488.35px;font-size:20px;font-weight:400;color:#1a1a1a;transform:scaleX(1.0300);">2,171</div>
<div class="t" style="left:119.00px;top:521.41px;font-size:20px;font-weight:400;color:#1a1a1a;transform:scaleX(1.0178);">Western NY</div>
<div class="t" style="left:252.84px;top:521.41px;font-size:20px;font-weight:400;color:#1a1a1a;transform:scaleX(1.0364);">Erie</div>
<div class="t" style="left:379.66px;top:521.41px;font-size:20px;font-weight:400;color:#1a1a1a;transform:scaleX(1.0365);">70 or Older</div>
<div class="t" style="left:644.80px;top:521.41px;font-size:20px;font-weight:400;color:#1a1a1a;">8</div>
<div class="t" style="left:665.86px;top:521.41px;font-size:20px;font-weight:400;color:#1a1a1a;transform:scaleX(1.0271);">Emergency</div>
<div class="t" style="left:822.00px;top:521.41px;font-size:20px;font-weight:400;color:#1a1a1a;">$</div>
<div class="t" style="left:872.13px;top:521.41px;font-size:20px;font-weight:400;color:#1a1a1a;transform:scaleX(1.0300);">11,063</div>
<div class="t" style="left:945.40px;top:521.41px;font-size:20px;font-weight:400;color:#1a1a1a;">$</div>
<div class="t" style="left:1018.92px;top:521.41px;font-size:20px;font-weight:400;color:#1a1a1a;transform:scaleX(1.0300);">1,383</div>
<div class="t" style="left:119.00px;top:554.47px;font-size:20px;font-weight:400;color:#1a1a1a;transform:scaleX(1.0178);">Western NY</div>
<div class="t" style="left:252.84px;top:554.47px;font-size:20px;font-weight:400;color:#1a1a1a;transform:scaleX(1.0364);">Erie</div>
<div class="t" style="left:379.66px;top:554.47px;font-size:20px;font-weight:400;color:#1a1a1a;transform:scaleX(1.0365);">70 or Older</div>
<div class="t" style="left:645.00px;top:554.47px;font-size:20px;font-weight:400;color:#1a1a1a;">2</div>
<div class="t" style="left:665.86px;top:554.47px;font-size:20px;font-weight:400;color:#1a1a1a;transform:scaleX(1.0271);">Emergency</div>
<div class="t" style="left:822.00px;top:554.47px;font-size:20px;font-weight:400;color:#1a1a1a;">$</div>
<div class="t" style="left:870.38px;top:554.47px;font-size:20px;font-weight:400;color:#1a1a1a;transform:scaleX(1.0300);">13,214</div>
<div class="t" style="left:945.40px;top:554.47px;font-size:20px;font-weight:400;color:#1a1a1a;">$</div>
<div class="t" style="left:1019.13px;top:554.47px;font-size:20px;font-weight:400;color:#1a1a1a;transform:scaleX(1.0300);">6,607</div>
<div class="r" style="left:112px;top:194px;width:961px;height:3px;background:#555555;"></div>
<div class="r" style="left:112px;top:194px;width:3px;height:387px;background:#555555;"></div>
<div class="r" style="left:112px;top:578px;width:961px;height:3px;background:#555555;"></div>
<div class="t" style="left:118.24px;top:621.70px;font-size:19.5px;font-weight:700;color:#111;transform:scaleX(0.9931);">DISCHARG</div>
<div class="r" style="left:221px;top:619px;width:23px;height:24px;background:#d3e8ec;border-radius:4px;"></div>
<svg class="r" style="left:221px;top:619px;" width="23" height="24" viewBox="0 0 23 24"><g fill="none" stroke="#4b8f9e" stroke-width="1.7" stroke-linecap="round" stroke-linejoin="round"><line x1="11.5" y1="4" x2="11.5" y2="20"/><path d="M6 14.5 L11.5 20 L17 14.5"/></g></svg>
<div class="t" style="left:252.68px;top:621.70px;font-size:19.5px;font-weight:700;color:#111;transform:scaleX(1.0424);">Elective</div>
<svg class="r" style="left:351.5px;top:626px;" width="15" height="9" viewBox="0 0 15 9"><path d="M1.4 1.6 L7.5 7.7 L13.6 1.6" fill="none" stroke="#1e1e1e" stroke-width="1.5" stroke-linecap="round" stroke-linejoin="round"/></svg>
<div class="t" style="left:378.99px;top:621.70px;font-size:19.5px;font-weight:700;color:#111;transform:scaleX(1.0314);">Emergency</div>
<svg class="r" style="left:509.5px;top:626px;" width="15" height="9" viewBox="0 0 15 9"><path d="M1.4 1.6 L7.5 7.7 L13.6 1.6" fill="none" stroke="#1e1e1e" stroke-width="1.5" stroke-linecap="round" stroke-linejoin="round"/></svg>
<div class="t" style="left:536.65px;top:621.70px;font-size:19.5px;font-weight:700;color:#111;transform:scaleX(1.0677);">Newborn</div>
<svg class="r" style="left:638.5px;top:626px;" width="15" height="9" viewBox="0 0 15 9"><path d="M1.4 1.6 L7.5 7.7 L13.6 1.6" fill="none" stroke="#1e1e1e" stroke-width="1.5" stroke-linecap="round" stroke-linejoin="round"/></svg>
<div class="t" style="left:667.10px;top:621.70px;font-size:19.5px;font-weight:700;color:#111;transform:scaleX(1.0228);">Trauma</div>
<svg class="r" style="left:793.5px;top:626px;" width="15" height="9" viewBox="0 0 15 9"><path d="M1.4 1.6 L7.5 7.7 L13.6 1.6" fill="none" stroke="#1e1e1e" stroke-width="1.5" stroke-linecap="round" stroke-linejoin="round"/></svg>
<div class="t" style="left:820.26px;top:621.70px;font-size:19.5px;font-weight:700;color:#111;transform:scaleX(1.0582);">Urgent</div>
<svg class="r" style="left:916.5px;top:626px;" width="15" height="9" viewBox="0 0 15 9"><path d="M1.4 1.6 L7.5 7.7 L13.6 1.6" fill="none" stroke="#1e1e1e" stroke-width="1.5" stroke-linecap="round" stroke-linejoin="round"/></svg>
<div class="r" style="left:532px;top:646px;width:130px;height:34px;background:#eaf5f7;"></div>
<div class="t" style="left:198.80px;top:653.63px;font-size:20px;font-weight:400;color:#1a1a1a;">2021</div>
<div class="t" style="left:254.00px;top:653.63px;font-size:20px;font-weight:400;color:#1a1a1a;">$</div>
<div class="t" style="left:311.96px;top:653.63px;font-size:20px;font-weight:400;color:#1a1a1a;transform:scaleX(1.0260);">29.8 B</div>
<div class="t" style="left:380.30px;top:653.63px;font-size:20px;font-weight:400;color:#1a1a1a;">$</div>
<div class="t" style="left:458.87px;top:653.63px;font-size:20px;font-weight:400;color:#1a1a1a;transform:scaleX(1.0260);">103.4 B</div>
<div class="t" style="left:538.00px;top:653.63px;font-size:20px;font-weight:400;color:#1a1a1a;">$</div>
<div class="t" style="left:610.15px;top:653.63px;font-size:20px;font-weight:400;color:#1a1a1a;transform:scaleX(1.0260);">6.9 B</div>
<div class="t" style="left:667.30px;top:653.63px;font-size:20px;font-weight:400;color:#1a1a1a;">$</div>
<div class="t" style="left:765.15px;top:653.63px;font-size:20px;font-weight:400;color:#1a1a1a;transform:scaleX(1.0260);">1.0 B</div>
<div class="t" style="left:822.00px;top:653.63px;font-size:20px;font-weight:400;color:#1a1a1a;">$</div>
<div class="t" style="left:876.36px;top:653.63px;font-size:20px;font-weight:400;color:#1a1a1a;transform:scaleX(1.0260);">12.9 B</div>
<div class="t" style="left:198.60px;top:686.69px;font-size:20px;font-weight:400;color:#1a1a1a;">2020</div>
<div class="t" style="left:254.00px;top:686.69px;font-size:20px;font-weight:400;color:#1a1a1a;">$</div>
<div class="t" style="left:311.96px;top:686.69px;font-size:20px;font-weight:400;color:#1a1a1a;transform:scaleX(1.0260);">26.3 B</div>
<div class="t" style="left:380.30px;top:686.69px;font-size:20px;font-weight:400;color:#1a1a1a;">$</div>
<div class="t" style="left:470.36px;top:686.69px;font-size:20px;font-weight:400;color:#1a1a1a;transform:scaleX(1.0260);">91.9 B</div>
<div class="t" style="left:538.00px;top:686.69px;font-size:20px;font-weight:400;color:#1a1a1a;">$</div>
<div class="t" style="left:610.15px;top:686.69px;font-size:20px;font-weight:400;color:#1a1a1a;transform:scaleX(1.0260);">6.3 B</div>
<div class="t" style="left:667.30px;top:686.69px;font-size:20px;font-weight:400;color:#1a1a1a;">$</div>
<div class="t" style="left:765.15px;top:686.69px;font-size:20px;font-weight:400;color:#1a1a1a;transform:scaleX(1.0260);">0.7 B</div>
<div class="t" style="left:822.00px;top:686.69px;font-size:20px;font-weight:400;color:#1a1a1a;">$</div>
<div class="t" style="left:877.90px;top:686.69px;font-size:20px;font-weight:400;color:#1a1a1a;transform:scaleX(1.0260);">11.3 B</div>
<div class="t" style="left:198.80px;top:719.74px;font-size:20px;font-weight:400;color:#1a1a1a;">2019</div>
<div class="t" style="left:254.00px;top:719.74px;font-size:20px;font-weight:400;color:#1a1a1a;">$</div>
<div class="t" style="left:311.96px;top:719.74px;font-size:20px;font-weight:400;color:#1a1a1a;transform:scaleX(1.0260);">29.6 B</div>
<div class="t" style="left:380.30px;top:719.74px;font-size:20px;font-weight:400;color:#1a1a1a;">$</div>
<div class="t" style="left:470.36px;top:719.74px;font-size:20px;font-weight:400;color:#1a1a1a;transform:scaleX(1.0260);">89.1 B</div>
<div class="t" style="left:538.00px;top:719.74px;font-size:20px;font-weight:400;color:#1a1a1a;">$</div>
<div class="t" style="left:610.15px;top:719.74px;font-size:20px;font-weight:400;color:#1a1a1a;transform:scaleX(1.0260);">6.3 B</div>
<div class="t" style="left:667.30px;top:719.74px;font-size:20px;font-weight:400;color:#1a1a1a;">$</div>
<div class="t" style="left:765.15px;top:719.74px;font-size:20px;font-weight:400;color:#1a1a1a;transform:scaleX(1.0260);">0.7 B</div>
<div class="t" style="left:822.00px;top:719.74px;font-size:20px;font-weight:400;color:#1a1a1a;">$</div>
<div class="t" style="left:876.36px;top:719.74px;font-size:20px;font-weight:400;color:#1a1a1a;transform:scaleX(1.0260);">12.7 B</div>
<div class="t" style="left:198.70px;top:752.79px;font-size:20px;font-weight:400;color:#1a1a1a;">2018</div>
<div class="t" style="left:254.00px;top:752.79px;font-size:20px;font-weight:400;color:#1a1a1a;">$</div>
<div class="t" style="left:311.96px;top:752.79px;font-size:20px;font-weight:400;color:#1a1a1a;transform:scaleX(1.0260);">26.9 B</div>
<div class="t" style="left:380.30px;top:752.79px;font-size:20px;font-weight:400;color:#1a1a1a;">$</div>
<div class="t" style="left:470.36px;top:752.79px;font-size:20px;font-weight:400;color:#1a1a1a;transform:scaleX(1.0260);">81.3 B</div>
<div class="t" style="left:538.00px;top:752.79px;font-size:20px;font-weight:400;color:#1a1a1a;">$</div>
<div class="t" style="left:610.15px;top:752.79px;font-size:20px;font-weight:400;color:#1a1a1a;transform:scaleX(1.0260);">5.9 B</div>
<div class="t" style="left:667.30px;top:752.79px;font-size:20px;font-weight:400;color:#1a1a1a;">$</div>
<div class="t" style="left:765.15px;top:752.79px;font-size:20px;font-weight:400;color:#1a1a1a;transform:scaleX(1.0260);">0.7 B</div>
<div class="t" style="left:822.00px;top:752.79px;font-size:20px;font-weight:400;color:#1a1a1a;">$</div>
<div class="t" style="left:877.90px;top:752.79px;font-size:20px;font-weight:400;color:#1a1a1a;transform:scaleX(1.0260);">11.9 B</div>
<div class="t" style="left:198.90px;top:785.85px;font-size:20px;font-weight:400;color:#1a1a1a;">2017</div>
<div class="t" style="left:254.00px;top:785.85px;font-size:20px;font-weight:400;color:#1a1a1a;">$</div>
<div class="t" style="left:311.96px;top:785.85px;font-size:20px;font-weight:400;color:#1a1a1a;transform:scaleX(1.0260);">25.4 B</div>
<div class="t" style="left:380.30px;top:785.85px;font-size:20px;font-weight:400;color:#1a1a1a;">$</div>
<div class="t" style="left:470.36px;top:785.85px;font-size:20px;font-weight:400;color:#1a1a1a;transform:scaleX(1.0260);">74.8 B</div>
<div class="t" style="left:538.00px;top:785.85px;font-size:20px;font-weight:400;color:#1a1a1a;">$</div>
<div class="t" style="left:610.15px;top:785.85px;font-size:20px;font-weight:400;color:#1a1a1a;transform:scaleX(1.0260);">5.4 B</div>
<div class="t" style="left:667.30px;top:785.85px;font-size:20px;font-weight:400;color:#1a1a1a;">$</div>
<div class="t" style="left:765.15px;top:785.85px;font-size:20px;font-weight:400;color:#1a1a1a;transform:scaleX(1.0260);">0.6 B</div>
<div class="t" style="left:822.00px;top:785.85px;font-size:20px;font-weight:400;color:#1a1a1a;">$</div>
<div class="t" style="left:876.36px;top:785.85px;font-size:20px;font-weight:400;color:#1a1a1a;transform:scaleX(1.0260);">10.2 B</div>
<div class="t" style="left:198.70px;top:818.90px;font-size:20px;font-weight:400;color:#1a1a1a;">2016</div>
<div class="t" style="left:254.00px;top:818.90px;font-size:20px;font-weight:400;color:#1a1a1a;">$</div>
<div class="t" style="left:311.96px;top:818.90px;font-size:20px;font-weight:400;color:#1a1a1a;transform:scaleX(1.0260);">23.6 B</div>
<div class="t" style="left:380.30px;top:818.90px;font-size:20px;font-weight:400;color:#1a1a1a;">$</div>
<div class="t" style="left:470.36px;top:818.90px;font-size:20px;font-weight:400;color:#1a1a1a;transform:scaleX(1.0260);">70.0 B</div>
<div class="t" style="left:538.00px;top:818.90px;font-size:20px;font-weight:400;color:#1a1a1a;">$</div>
<div class="t" style="left:610.15px;top:818.90px;font-size:20px;font-weight:400;color:#1a1a1a;transform:scaleX(1.0260);">5.0 B</div>
<div class="t" style="left:667.30px;top:818.90px;font-size:20px;font-weight:400;color:#1a1a1a;">$</div>
<div class="t" style="left:765.15px;top:818.90px;font-size:20px;font-weight:400;color:#1a1a1a;transform:scaleX(1.0260);">0.5 B</div>
<div class="t" style="left:822.00px;top:818.90px;font-size:20px;font-weight:400;color:#1a1a1a;">$</div>
<div class="t" style="left:887.75px;top:818.90px;font-size:20px;font-weight:400;color:#1a1a1a;transform:scaleX(1.0260);">8.7 B</div>
<div class="t" style="left:198.70px;top:851.96px;font-size:20px;font-weight:400;color:#1a1a1a;">2015</div>
<div class="t" style="left:254.00px;top:851.96px;font-size:20px;font-weight:400;color:#1a1a1a;">$</div>
<div class="t" style="left:311.96px;top:851.96px;font-size:20px;font-weight:400;color:#1a1a1a;transform:scaleX(1.0260);">22.1 B</div>
<div class="t" style="left:380.30px;top:851.96px;font-size:20px;font-weight:400;color:#1a1a1a;">$</div>
<div class="t" style="left:470.36px;top:851.96px;font-size:20px;font-weight:400;color:#1a1a1a;transform:scaleX(1.0260);">65.8 B</div>
<div class="t" style="left:538.00px;top:851.96px;font-size:20px;font-weight:400;color:#1a1a1a;">$</div>
<div class="t" style="left:610.15px;top:851.96px;font-size:20px;font-weight:400;color:#1a1a1a;transform:scaleX(1.0260);">4.7 B</div>
<div class="t" style="left:667.30px;top:851.96px;font-size:20px;font-weight:400;color:#1a1a1a;">$</div>
<div class="t" style="left:765.15px;top:851.96px;font-size:20px;font-weight:400;color:#1a1a1a;transform:scaleX(1.0260);">0.5 B</div>
<div class="t" style="left:822.00px;top:851.96px;font-size:20px;font-weight:400;color:#1a1a1a;">$</div>
<div class="t" style="left:887.75px;top:851.96px;font-size:20px;font-weight:400;color:#1a1a1a;transform:scaleX(1.0260);">8.2 B</div>
<div class="r" style="left:113px;top:601px;width:827px;height:12px;background:linear-gradient(180deg,rgba(0,0,0,0) 0%,rgba(0,0,0,0.03) 100%);"></div>
<div class="r" style="left:940px;top:613px;width:10px;height:247px;background:linear-gradient(90deg,rgba(0,0,0,0.035) 0%,rgba(0,0,0,0) 100%);"></div>
<div class="r" style="left:113px;top:613px;width:827px;height:3px;background:#4b8f9e;"></div>
<div class="r" style="left:113px;top:613px;width:3px;height:247px;background:#4b8f9e;"></div>
<div class="r" style="left:937px;top:613px;width:3px;height:247px;background:#4b8f9e;"></div>
<div class="r" style="left:532px;top:645px;width:131px;height:36px;border:3px solid #4b8f9e;"></div>
<div class="r" style="left:1060px;top:253px;width:9.5px;height:60px;background:rgba(90,90,90,0.45);border-radius:5px;"></div>
<div class="r" style="left:1074px;top:195px;width:20px;height:665px;background:#fafafa;"></div>
<div class="r" style="left:1073px;top:195px;width:1px;height:665px;background:#cdcdcd;"></div>
<div class="r" style="left:1074px;top:216px;width:20px;height:1px;background:#e6e6e6;"></div>
<svg class="r" style="left:1079px;top:200px;" width="12" height="11" viewBox="0 0 12 11"><path d="M6 1.5 L11 10 H1 Z" fill="#c6c6c6"/></svg>
<div class="r" style="left:1078px;top:220px;width:13px;height:60px;background:#c8c8c8;border-radius:7px;"></div>
<div class="r" style="left:1074px;top:839px;width:20px;height:1px;background:#e6e6e6;"></div>
<svg class="r" style="left:1079px;top:845px;" width="12" height="11" viewBox="0 0 12 11"><path d="M1 1 H11 L6 9.5 Z" fill="#c6c6c6"/></svg>
<div class="r" style="left:113px;top:860px;width:961px;height:25px;background:#fafafa;"></div>
<div class="r" style="left:0px;top:882px;width:1094px;height:3px;background:#fdfdfd;"></div>
<div class="r" style="left:113px;top:860px;width:961px;height:1px;background:#dddddd;"></div>
<div class="r" style="left:0px;top:881px;width:1094px;height:1px;background:#dcdcdc;"></div>
<div class="r" style="left:0px;top:860px;width:113px;height:21px;background:#f1f1f1;"></div>
<div class="r" style="left:104px;top:860px;width:9px;height:21px;background:linear-gradient(90deg,rgba(0,0,0,0) 0%,rgba(0,0,0,0.045) 100%);"></div>
<div class="t" style="left:44.05px;top:856.07px;font-size:16.8px;font-weight:400;color:#222;">20</div>
<div class="r" style="left:0px;top:877px;width:113px;height:1px;background:#d0d0d0;"></div>
<div class="r" style="left:112px;top:860px;width:1px;height:22px;background:#cfcfcf;"></div>
<div class="r" style="left:134px;top:861px;width:1px;height:20px;background:#e6e6e6;"></div>
<svg class="r" style="left:117px;top:865px;" width="12" height="12" viewBox="0 0 12 12"><path d="M10 0.5 V11 L1.5 5.75 Z" fill="#c4c4c4"/></svg>
<div class="r" style="left:138px;top:864px;width:461px;height:14px;background:#c4c4c4;border-radius:7px;"></div>
<div class="r" style="left:1053px;top:861px;width:1px;height:20px;background:#e6e6e6;"></div>
<svg class="r" style="left:1059px;top:865px;" width="12" height="12" viewBox="0 0 12 12"><path d="M1 0.5 V11 L10 5.75 Z" fill="#c4c4c4"/></svg>
<div class="r" style="left:1074px;top:860px;width:20px;height:22px;background:#fafafa;"></div>
<div class="r" style="left:1074px;top:860px;width:20px;height:1px;background:#dddddd;"></div>
<div class="r" style="left:1073px;top:195px;width:1px;height:687px;background:#cdcdcd;"></div>
<div class="r" style="left:1094px;top:112px;width:3px;height:773px;background:#e0e0e0;"></div>
<div class="r" style="left:1097px;top:112px;width:811px;height:773px;background:#fff;"></div>
<div class="t" style="left:1120.41px;top:147.21px;font-size:25.5px;font-weight:700;color:#111;transform:scaleX(0.9704);">Configure pivot table</div>
<svg class="r" style="left:1855px;top:149px;" width="22" height="22" viewBox="0 0 22 22"><g stroke="#222" stroke-width="1.8" stroke-linecap="round"><line x1="2.5" y1="2.5" x2="19.5" y2="19.5"/><line x1="19.5" y1="2.5" x2="2.5" y2="19.5"/></g></svg>
<div class="t" style="left:1120.11px;top:211.62px;font-size:19.7px;font-weight:700;color:#111;transform:scaleX(1.0058);">Pivot source</div>
<div class="r" style="left:1121px;top:244px;width:769px;height:60px;background:#fafafa;border:1px solid #dedede;border-radius:5px;"></div>
<div class="r" style="left:1179px;top:245px;width:1px;height:58px;background:#dedede;"></div>
<svg class="r" style="left:1139px;top:262px;" width="24" height="24" viewBox="0 0 24 24"><g fill="none" stroke="#222" stroke-width="1.7" stroke-linecap="round"><circle cx="12" cy="12" r="7.3"/><line x1="12" y1="1.5" x2="12" y2="6.5"/><line x1="12" y1="17.5" x2="12" y2="22.5"/><line x1="1.5" y1="12" x2="6.5" y2="12"/><line x1="17.5" y1="12" x2="22.5" y2="12"/></g></svg>
<div class="t" style="left:1198.09px;top:263.77px;font-size:20px;font-weight:400;color:#111;transform:scaleX(1.0153);">Sheet0!A1</div>
<div class="r" style="left:1304px;top:261px;width:100px;height:27px;background:#4a8f9c;border-radius:3px;"></div>
<div class="t" style="left:1312.38px;top:266.03px;font-size:16.5px;font-weight:700;color:#fff;transform:scaleX(1.0425);">Data table</div>
<div class="r" style="left:1097px;top:328px;width:811px;height:1px;background:#e6e6e6;"></div>
<div class="r" style="left:1673px;top:329px;width:1px;height:556px;background:#e6e6e6;"></div>
<div class="t" style="left:1119.40px;top:359.87px;font-size:20px;font-weight:700;color:#111;">Rows</div>
<svg class="r" style="left:1619.5px;top:362.8px;" width="15" height="15" viewBox="0 0 15 15"><g stroke="#111" stroke-width="2"><line x1="7.5" y1="0" x2="7.5" y2="15"/><line x1="0" y1="7.5" x2="15" y2="7.5"/></g></svg>
<div class="t" style="left:1119.90px;top:517.17px;font-size:20px;font-weight:700;color:#111;">Columns</div>
<svg class="r" style="left:1619.5px;top:520.1px;" width="15" height="15" viewBox="0 0 15 15"><g stroke="#111" stroke-width="2"><line x1="7.5" y1="0" x2="7.5" y2="15"/><line x1="0" y1="7.5" x2="15" y2="7.5"/></g></svg>
<div class="r" style="left:1097px;top:486px;width:576px;height:1px;background:#e6e6e6;"></div>
<div class="t" style="left:1120.60px;top:675.07px;font-size:20px;font-weight:700;color:#111;transform:scaleX(1.0208);">Values</div>
<svg class="r" style="left:1619.5px;top:678px;" width="15" height="15" viewBox="0 0 15 15"><g stroke="#111" stroke-width="2"><line x1="7.5" y1="0" x2="7.5" y2="15"/><line x1="0" y1="7.5" x2="15" y2="7.5"/></g></svg>
<div class="r" style="left:1097px;top:643px;width:576px;height:1px;background:#e6e6e6;"></div>
<div class="t" style="left:1119.39px;top:832.07px;font-size:20px;font-weight:700;color:#111;transform:scaleX(1.0104);">Filters</div>
<svg class="r" style="left:1619.5px;top:835px;" width="15" height="15" viewBox="0 0 15 15"><g stroke="#111" stroke-width="2"><line x1="7.5" y1="0" x2="7.5" y2="15"/><line x1="0" y1="7.5" x2="15" y2="7.5"/></g></svg>
<div class="r" style="left:1097px;top:801px;width:576px;height:1px;background:#e6e6e6;"></div>
<div class="r" style="left:1097px;top:883px;width:576px;height:1px;background:#e6e6e6;"></div>
<div class="r" style="left:1145px;top:404.5px;width:504px;height:50px;background:#fafafa;border:1px solid #dedede;border-radius:5px;"></div>
<div class="t" style="left:1156.61px;top:419.57px;font-size:20px;font-weight:400;color:#111;transform:scaleX(0.8698);">DISCHARGE_YEAR</div>
<svg class="r" style="left:1576px;top:426.5px;" width="13" height="9" viewBox="0 0 13 9"><path d="M1.5 1.5 L6.5 6.5 L11.5 1.5" fill="none" stroke="#777" stroke-width="1.7" stroke-linecap="round" stroke-linejoin="round"/></svg>
<div class="r" style="left:1598px;top:405.5px;width:1px;height:48px;background:#dedede;"></div>
<div class="r" style="left:1599px;top:405.5px;width:49px;height:48px;background:#fff;border-radius:0 4px 4px 0;"></div>
<svg class="r" style="left:1615.5px;top:421.5px;" width="17" height="17" viewBox="0 0 17 17"><g stroke="#111" stroke-width="2.2" stroke-linecap="butt"><line x1="1.8" y1="1.8" x2="15.2" y2="15.2"/><line x1="15.2" y1="1.8" x2="1.8" y2="15.2"/></g></svg>
<svg class="r" style="left:1121.7px;top:421.0px;" width="13" height="17" viewBox="0 0 13 17"><g fill="#6e6e6e"><circle cx="2.3" cy="2.2" r="1.9"/><circle cx="8.3" cy="2.2" r="1.9"/><circle cx="2.3" cy="8.2" r="1.9"/><circle cx="8.3" cy="8.2" r="1.9"/><circle cx="2.3" cy="14.2" r="1.9"/><circle cx="8.3" cy="14.2" r="1.9"/></g></svg>
<div class="r" style="left:1145px;top:562.5px;width:504px;height:50px;background:#fafafa;border:1px solid #dedede;border-radius:5px;"></div>
<div class="t" style="left:1158.00px;top:577.57px;font-size:20px;font-weight:400;color:#111;transform:scaleX(0.8890);">ADMISSION_TYPE</div>
<svg class="r" style="left:1576px;top:584.5px;" width="13" height="9" viewBox="0 0 13 9"><path d="M1.5 1.5 L6.5 6.5 L11.5 1.5" fill="none" stroke="#777" stroke-width="1.7" stroke-linecap="round" stroke-linejoin="round"/></svg>
<div class="r" style="left:1598px;top:563.5px;width:1px;height:48px;background:#dedede;"></div>
<div class="r" style="left:1599px;top:563.5px;width:49px;height:48px;background:#fff;border-radius:0 4px 4px 0;"></div>
<svg class="r" style="left:1615.5px;top:579.5px;" width="17" height="17" viewBox="0 0 17 17"><g stroke="#111" stroke-width="2.2" stroke-linecap="butt"><line x1="1.8" y1="1.8" x2="15.2" y2="15.2"/><line x1="15.2" y1="1.8" x2="1.8" y2="15.2"/></g></svg>
<svg class="r" style="left:1121.7px;top:579.0px;" width="13" height="17" viewBox="0 0 13 17"><g fill="#6e6e6e"><circle cx="2.3" cy="2.2" r="1.9"/><circle cx="8.3" cy="2.2" r="1.9"/><circle cx="2.3" cy="8.2" r="1.9"/><circle cx="8.3" cy="8.2" r="1.9"/><circle cx="2.3" cy="14.2" r="1.9"/><circle cx="8.3" cy="14.2" r="1.9"/></g></svg>
<div class="r" style="left:1145px;top:720px;width:504px;height:50px;background:#fafafa;border:1px solid #dedede;border-radius:5px;"></div>
<div class="t" style="left:1157.65px;top:735.07px;font-size:20px;font-weight:400;color:#111;transform:scaleX(0.8698);">TOTAL_CHARGES</div>
<svg class="r" style="left:1440px;top:742px;" width="13" height="9" viewBox="0 0 13 9"><path d="M1.5 1.5 L6.5 6.5 L11.5 1.5" fill="none" stroke="#777" stroke-width="1.7" stroke-linecap="round" stroke-linejoin="round"/></svg>
<div class="r" style="left:1598px;top:721px;width:1px;height:48px;background:#dedede;"></div>
<div class="r" style="left:1599px;top:721px;width:49px;height:48px;background:#fff;border-radius:0 4px 4px 0;"></div>
<svg class="r" style="left:1615.5px;top:737px;" width="17" height="17" viewBox="0 0 17 17"><g stroke="#111" stroke-width="2.2" stroke-linecap="butt"><line x1="1.8" y1="1.8" x2="15.2" y2="15.2"/><line x1="15.2" y1="1.8" x2="1.8" y2="15.2"/></g></svg>
<svg class="r" style="left:1121.7px;top:736.5px;" width="13" height="17" viewBox="0 0 13 17"><g fill="#6e6e6e"><circle cx="2.3" cy="2.2" r="1.9"/><circle cx="8.3" cy="2.2" r="1.9"/><circle cx="2.3" cy="8.2" r="1.9"/><circle cx="8.3" cy="8.2" r="1.9"/><circle cx="2.3" cy="14.2" r="1.9"/><circle cx="8.3" cy="14.2" r="1.9"/></g></svg>
<div class="r" style="left:1462px;top:721px;width:1px;height:48px;background:#dedede;"></div>
<div class="t" style="left:1480.86px;top:735.07px;font-size:20px;font-weight:400;color:#111;transform:scaleX(0.9385);">Sum</div>
<svg class="r" style="left:1569px;top:742px;" width="13" height="9" viewBox="0 0 13 9"><path d="M1.5 1.5 L6.5 6.5 L11.5 1.5" fill="none" stroke="#777" stroke-width="1.7" stroke-linecap="round" stroke-linejoin="round"/></svg>
<div class="r" style="left:1692px;top:347.5px;width:204px;height:50px;background:#fff;border:1px solid #dedede;border-radius:5px;"></div>
<div class="t" style="left:1704.93px;top:362.99px;font-size:19.5px;font-weight:400;color:#9a9a9a;transform:scaleX(0.9948);">Search fields...</div>
<div class="t" style="left:1718.94px;top:415.07px;font-size:20px;font-weight:400;color:#1a1a1a;transform:scaleX(0.8488);">SERVICE_AREA</div>
<svg class="r" style="left:1694.5px;top:417.5px;" width="13" height="17" viewBox="0 0 13 17"><g fill="#6e6e6e"><circle cx="2.3" cy="2.2" r="1.9"/><circle cx="8.3" cy="2.2" r="1.9"/><circle cx="2.3" cy="8.2" r="1.9"/><circle cx="8.3" cy="8.2" r="1.9"/><circle cx="2.3" cy="14.2" r="1.9"/><circle cx="8.3" cy="14.2" r="1.9"/></g></svg>
<div class="t" style="left:1718.78px;top:460.07px;font-size:20px;font-weight:400;color:#1a1a1a;transform:scaleX(0.9193);">COUNTY</div>
<svg class="r" style="left:1694.5px;top:462.5px;" width="13" height="17" viewBox="0 0 13 17"><g fill="#6e6e6e"><circle cx="2.3" cy="2.2" r="1.9"/><circle cx="8.3" cy="2.2" r="1.9"/><circle cx="2.3" cy="8.2" r="1.9"/><circle cx="8.3" cy="8.2" r="1.9"/><circle cx="2.3" cy="14.2" r="1.9"/><circle cx="8.3" cy="14.2" r="1.9"/></g></svg>
<div class="t" style="left:1718.25px;top:505.07px;font-size:20px;font-weight:400;color:#1a1a1a;transform:scaleX(0.9079);">FACILITY</div>
<svg class="r" style="left:1694.5px;top:507.5px;" width="13" height="17" viewBox="0 0 13 17"><g fill="#6e6e6e"><circle cx="2.3" cy="2.2" r="1.9"/><circle cx="8.3" cy="2.2" r="1.9"/><circle cx="2.3" cy="8.2" r="1.9"/><circle cx="8.3" cy="8.2" r="1.9"/><circle cx="2.3" cy="14.2" r="1.9"/><circle cx="8.3" cy="14.2" r="1.9"/></g></svg>
<div class="t" style="left:1719.70px;top:550.07px;font-size:20px;font-weight:400;color:#1a1a1a;transform:scaleX(0.8449);">AGE_GROUP</div>
<svg class="r" style="left:1694.5px;top:552.5px;" width="13" height="17" viewBox="0 0 13 17"><g fill="#6e6e6e"><circle cx="2.3" cy="2.2" r="1.9"/><circle cx="8.3" cy="2.2" r="1.9"/><circle cx="2.3" cy="8.2" r="1.9"/><circle cx="8.3" cy="8.2" r="1.9"/><circle cx="2.3" cy="14.2" r="1.9"/><circle cx="8.3" cy="14.2" r="1.9"/></g></svg>
<div class="t" style="left:1718.84px;top:595.07px;font-size:20px;font-weight:400;color:#1a1a1a;transform:scaleX(0.8600);">GENDER</div>
<svg class="r" style="left:1694.5px;top:597.5px;" width="13" height="17" viewBox="0 0 13 17"><g fill="#6e6e6e"><circle cx="2.3" cy="2.2" r="1.9"/><circle cx="8.3" cy="2.2" r="1.9"/><circle cx="2.3" cy="8.2" r="1.9"/><circle cx="8.3" cy="8.2" r="1.9"/><circle cx="2.3" cy="14.2" r="1.9"/><circle cx="8.3" cy="14.2" r="1.9"/></g></svg>
<div class="t" style="left:1718.32px;top:640.07px;font-size:20px;font-weight:400;color:#1a1a1a;transform:scaleX(0.8625);">RACE</div>
<svg class="r" style="left:1694.5px;top:642.5px;" width="13" height="17" viewBox="0 0 13 17"><g fill="#6e6e6e"><circle cx="2.3" cy="2.2" r="1.9"/><circle cx="8.3" cy="2.2" r="1.9"/><circle cx="2.3" cy="8.2" r="1.9"/><circle cx="8.3" cy="8.2" r="1.9"/><circle cx="2.3" cy="14.2" r="1.9"/><circle cx="8.3" cy="14.2" r="1.9"/></g></svg>
<div class="t" style="left:1718.23px;top:685.07px;font-size:20px;font-weight:400;color:#1a1a1a;transform:scaleX(0.9198);">ETHNICITY</div>
<svg class="r" style="left:1694.5px;top:687.5px;" width="13" height="17" viewBox="0 0 13 17"><g fill="#6e6e6e"><circle cx="2.3" cy="2.2" r="1.9"/><circle cx="8.3" cy="2.2" r="1.9"/><circle cx="2.3" cy="8.2" r="1.9"/><circle cx="8.3" cy="8.2" r="1.9"/><circle cx="2.3" cy="14.2" r="1.9"/><circle cx="8.3" cy="14.2" r="1.9"/></g></svg>
<div class="t" style="left:1718.30px;top:730.07px;font-size:20px;font-weight:400;color:#1a1a1a;transform:scaleX(0.8728);">LENGTH_OF_STAY</div>
<svg class="r" style="left:1694.5px;top:732.5px;" width="13" height="17" viewBox="0 0 13 17"><g fill="#6e6e6e"><circle cx="2.3" cy="2.2" r="1.9"/><circle cx="8.3" cy="2.2" r="1.9"/><circle cx="2.3" cy="8.2" r="1.9"/><circle cx="8.3" cy="8.2" r="1.9"/><circle cx="2.3" cy="14.2" r="1.9"/><circle cx="8.3" cy="14.2" r="1.9"/></g></svg>
<div class="t" style="left:1719.70px;top:775.07px;font-size:20px;font-weight:400;color:#1a1a1a;transform:scaleX(0.8827);">ADMISSION_TYPE</div>
<svg class="r" style="left:1694.5px;top:777.5px;" width="13" height="17" viewBox="0 0 13 17"><g fill="#6e6e6e"><circle cx="2.3" cy="2.2" r="1.9"/><circle cx="8.3" cy="2.2" r="1.9"/><circle cx="2.3" cy="8.2" r="1.9"/><circle cx="8.3" cy="8.2" r="1.9"/><circle cx="2.3" cy="14.2" r="1.9"/><circle cx="8.3" cy="14.2" r="1.9"/></g></svg>
<div class="t" style="left:1718.30px;top:820.07px;font-size:20px;font-weight:400;color:#1a1a1a;transform:scaleX(0.8731);">DISCHARGE_YEAR</div>
<svg class="r" style="left:1694.5px;top:822.5px;" width="13" height="17" viewBox="0 0 13 17"><g fill="#6e6e6e"><circle cx="2.3" cy="2.2" r="1.9"/><circle cx="8.3" cy="2.2" r="1.9"/><circle cx="2.3" cy="8.2" r="1.9"/><circle cx="8.3" cy="8.2" r="1.9"/><circle cx="2.3" cy="14.2" r="1.9"/><circle cx="8.3" cy="14.2" r="1.9"/></g></svg>
<div class="t" style="left:1719.35px;top:865.07px;font-size:20px;font-weight:400;color:#1a1a1a;transform:scaleX(0.8739);">TOTAL_CHARGES</div>
<svg class="r" style="left:1694.5px;top:867.5px;" width="13" height="17" viewBox="0 0 13 17"><g fill="#6e6e6e"><circle cx="2.3" cy="2.2" r="1.9"/><circle cx="8.3" cy="2.2" r="1.9"/><circle cx="2.3" cy="8.2" r="1.9"/><circle cx="8.3" cy="8.2" r="1.9"/><circle cx="2.3" cy="14.2" r="1.9"/><circle cx="8.3" cy="14.2" r="1.9"/></g></svg>
</body></html>
